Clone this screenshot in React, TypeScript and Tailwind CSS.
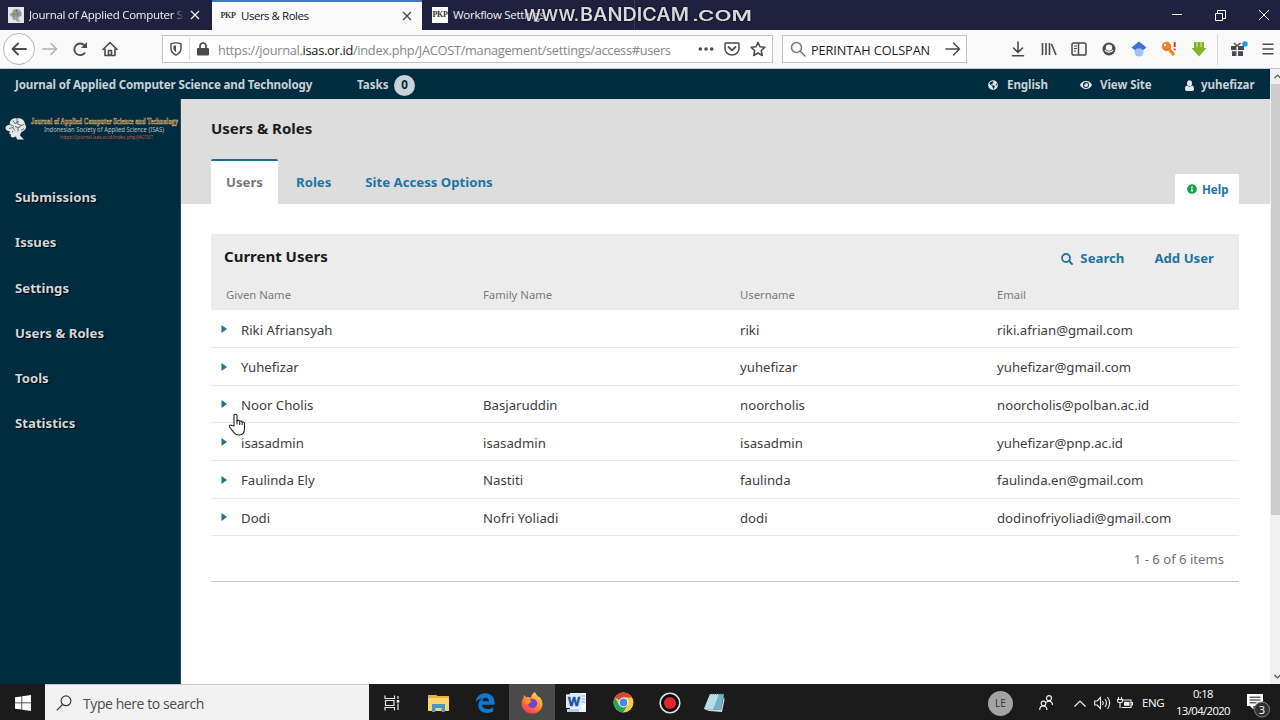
import type { ReactNode } from 'react';
import clsx from 'clsx';
import { FaEye, FaGlobeAmericas, FaInfoCircle } from 'react-icons/fa';

const navItems = ['Submissions', 'Issues', 'Settings', 'Users & Roles', 'Tools', 'Statistics'];

const users = [
  { given: 'Riki Afriansyah', family: '', username: 'riki', email: 'riki.afrian@gmail.com' },
  { given: 'Yuhefizar', family: '', username: 'yuhefizar', email: 'yuhefizar@gmail.com' },
  { given: 'Noor Cholis', family: 'Basjaruddin', username: 'noorcholis', email: 'noorcholis@polban.ac.id' },
  { given: 'isasadmin', family: 'isasadmin', username: 'isasadmin', email: 'yuhefizar@pnp.ac.id' },
  { given: 'Faulinda Ely', family: 'Nastiti', username: 'faulinda', email: 'faulinda.en@gmail.com' },
  { given: 'Dodi', family: 'Nofri Yoliadi', username: 'dodi', email: 'dodinofriyoliadi@gmail.com' },
];

function CloseIcon({ className }: { className?: string }) {
  return (
    <svg viewBox="0 0 10 10" className={clsx('h-[10px] w-[10px] shrink-0', className)} fill="none" stroke="currentColor" strokeWidth="1.3">
      <path d="M1 1l8 8M9 1L1 9" />
    </svg>
  );
}

function BrainHead({ className, color }: { className?: string; color: string }) {
  return (
    <svg viewBox="0 0 22 24" className={className}>
      <path
        d="M5 8C4 4 8 1 12 2c4-1 8 2 8 6 2 2 1 5-1 6l-3 2-1 3 4 4h-7l-1-3-3 1c-2 0-3-1-2-3l-2-1 1-2-3-1c-2-1-2-4 0-5z"
        fill={color}
      />
      <path
        d="M5 8l4 2M8 4l2 3 4-2M12 2v5l4 2 3-1M10 10l3 1 3-1M13 11v4M4 12l4-1 2 3M16 14l3-2M8 14l-1 2"
        stroke="#35505c"
        strokeWidth=".8"
        fill="none"
      />
    </svg>
  );
}

function PkpIcon() {
  return (
    <span className="flex h-4 w-4 shrink-0 items-center justify-center bg-white font-['Liberation_Serif',serif] text-[8px] font-bold tracking-[-0.4px] text-[#333]">
      PKP
    </span>
  );
}

function TabBar() {
  return (
    <div className="relative flex h-[30px] bg-[#20213f] text-[11.5px] tracking-[-0.28px] text-[#f0f0f4]">
      <div className="flex w-[212px] items-center pl-2">
        <span className="flex h-4 w-4 items-center justify-center bg-[#e5e5e5]">
          <BrainHead className="h-[14px] w-[14px]" color="#a5a5a5" />
        </span>
        <span className="ml-[5px] w-[155px] overflow-hidden whitespace-nowrap [mask-image:linear-gradient(to_right,black_92%,transparent)]">
          Journal of Applied Computer S
        </span>
        <CloseIcon className="ml-[6px]" />
      </div>
      <div className="flex w-[210px] items-center border-t-2 border-[#3d78c0] bg-[#f9f9fa] pl-2 text-[#15151a]">
        <PkpIcon />
        <span className="ml-[5px] w-[161px] tracking-[-0.48px]">Users &amp; Roles</span>
        <CloseIcon className="text-[#444]" />
      </div>
      <div className="flex w-[213px] items-center border-r border-[#3c3c58] pl-[10px]">
        <PkpIcon />
        <span className="ml-[5px] whitespace-nowrap">Workflow Settings</span>
      </div>
      <div className="ml-auto flex items-center text-white">
        <svg viewBox="0 0 10 10" className="h-[10px] w-[10px]" stroke="currentColor">
          <path d="M0 4.5h10" />
        </svg>
        <svg viewBox="0 0 11 11" className="ml-[33px] h-[11px] w-[11px]" fill="none" stroke="currentColor">
          <path d="M.5 3.5h7v7h-7zM2.5 3V.5h8v8H8" />
        </svg>
        <svg viewBox="0 0 10 10" className="mr-[11px] ml-[33px] h-[10px] w-[10px]" stroke="currentColor">
          <path d="M0 0l10 10M10 0L0 10" />
        </svg>
      </div>
      {/* screen recorder watermark */}
      <svg
        viewBox="0 0 230 29"
        className="absolute top-0 left-[524px] h-[29px] w-[230px] overflow-visible font-['Inter',sans-serif] font-semibold tracking-normal text-[#d8d8de] drop-shadow-[0_0_1px_#000]"
        fill="currentColor"
      >
        <text x="0" y="20.5" fontSize="16" textLength="55" lengthAdjust="spacingAndGlyphs">WWW.</text>
        <text x="56" y="20.5" fontSize="18" textLength="109" lengthAdjust="spacingAndGlyphs">BANDICAM</text>
        <text x="168" y="20.5" fontSize="14" textLength="60" lengthAdjust="spacingAndGlyphs">.COM</text>
      </svg>
    </div>
  );
}

function Toolbar() {
  return (
    <div className="flex h-[39px] items-center border-b border-[#c9c9cd] bg-[#f9f9fa] text-[#4a4a4f]">
      <span className="ml-[3px] flex h-8 w-8 items-center justify-center rounded-full border border-[#b5b5b8] bg-white">
        <svg viewBox="0 0 16 16" className="h-4 w-4" fill="none" stroke="currentColor" strokeWidth="1.8" strokeLinecap="round" strokeLinejoin="round">
          <path d="M15 8H1.5M7 2.5L1.5 8 7 13.5" />
        </svg>
      </span>
      <svg viewBox="0 0 16 16" className="ml-[7px] h-4 w-4 text-[#b2b2b5]" fill="none" stroke="currentColor" strokeWidth="1.6" strokeLinecap="round" strokeLinejoin="round">
        <path d="M1 8h13.5M9 2.5L14.5 8 9 13.5" />
      </svg>
      <svg viewBox="0 0 16 16" className="ml-[14px] h-4 w-4" fill="none" stroke="currentColor" strokeWidth="1.9">
        <path d="M13 11.5A5.8 5.8 0 1 1 12.5 4.5" />
        <path d="M15 1v6H9z" fill="currentColor" stroke="none" />
      </svg>
      <svg viewBox="0 0 16 16" className="ml-[14px] h-4 w-4" fill="none" stroke="currentColor" strokeWidth="1.6" strokeLinejoin="round" strokeLinecap="round">
        <path d="M1 8.5L8 1.5l7 7M3 8v6.500h10V8" />
        <path d="M6.500 14V9.500h3V14z" />
      </svg>

      <div className="ml-[44px] flex h-[28px] w-[611px] items-center border border-[#c2c2c6] bg-white">
        <svg viewBox="0 0 14 14" className="ml-[6px] h-[14px] w-[14px]" fill="none" stroke="currentColor" strokeWidth="1.4">
          <path d="M7 .9c1.800 0 3.500.3 5 .9v4.500c0 3.200-1.900 5.400-5 6.900-3.100-1.500-5-3.700-5-6.900V1.800C3.500 1.200 5.200.9 7 .9z" />
          <path d="M7 3.500v6.500c-1.700-1-2.500-2-2.500-4V3.800z" fill="currentColor" stroke="none" />
        </svg>
        <span className="ml-[6px] h-[22px] w-px bg-[#d9d9dc]" />
        <svg viewBox="0 0 12 14" className="ml-[7px] h-[14px] w-3" fill="currentColor">
          <rect x="0" y="6" width="12" height="7.500" rx="1" />
          <path d="M3 6.500V4a3 3 0 0 1 6 0v2.500" fill="none" stroke="currentColor" strokeWidth="1.700" />
        </svg>
        <span className="ml-[9px] w-[480px] pt-[3px] text-[12.800px] tracking-[-0.29px] whitespace-nowrap text-[#85858a]">
          https://journal.<span className="text-[#151518]">isas.or.id</span>/index.php/JACOST/management/settings/access#users
        </span>
        <svg viewBox="0 0 16 4" className="h-1 w-4 shrink-0" fill="currentColor">
          <circle cx="2.300" cy="2" r="1.800" />
          <circle cx="8" cy="2" r="1.800" />
          <circle cx="13.700" cy="2" r="1.800" />
        </svg>
        <svg viewBox="0 0 16 14" className="ml-[10px] h-[14px] w-4 shrink-0" fill="none" stroke="currentColor" strokeWidth="1.500" strokeLinecap="round" strokeLinejoin="round">
          <path d="M2 1h12a1 1 0 0 1 1 1v4.500a7 6.500 0 0 1-14 0V2a1 1 0 0 1 1-1z" />
          <path d="M4.500 5L8 8.300 11.500 5" strokeWidth="1.800" />
        </svg>
        <svg viewBox="0 0 16 16" className="ml-[10px] h-4 w-4 shrink-0" fill="none" stroke="currentColor" strokeWidth="1.500" strokeLinejoin="round">
          <path d="M8 1.300l2 4.500 4.900.5-3.700 3.300 1.100 4.900L8 12l-4.300 2.500 1.100-4.900L1.100 6.300 6 5.800z" />
        </svg>
      </div>

      <div className="ml-[9px] flex h-[28px] w-[185px] items-center border border-[#c2c2c6] bg-white">
        <svg viewBox="0 0 16 16" className="ml-[7px] h-4 w-4 text-[#77777a]" fill="none" stroke="currentColor" strokeWidth="1.500" strokeLinecap="round">
          <circle cx="6.500" cy="6.500" r="5" />
          <path d="M10.300 10.300L15 15" />
        </svg>
        <span className="ml-[5px] w-[134px] pt-[3px] text-[12.700px] tracking-[-0.05px] whitespace-nowrap text-[#222]">PERINTAH COLSPAN</span>
        <svg viewBox="0 0 16 16" className="h-4 w-4 shrink-0" fill="none" stroke="currentColor" strokeWidth="1.500" strokeLinecap="round" strokeLinejoin="round">
          <path d="M1 8h13.500M8.500 2l6 6-6 6" />
        </svg>
      </div>

      <div className="ml-[44px] flex items-center">
        <svg viewBox="0 0 14 16" className="h-4 w-[14px]" fill="none" stroke="currentColor" strokeWidth="1.600" strokeLinecap="round" strokeLinejoin="round">
          <path d="M7 1v10M2.500 7L7 11.300 11.500 7M1.500 14.800h11" />
        </svg>
        <svg viewBox="0 0 16 14" className="ml-4 h-[14px] w-4" fill="none" stroke="currentColor" strokeWidth="1.600">
          <path d="M1.500 1v12M5 1v12M8.500 1v12M10.500 2l4.500 11" />
        </svg>
        <svg viewBox="0 0 16 14" className="ml-[14px] h-[14px] w-4" fill="none" stroke="currentColor" strokeWidth="1.500">
          <rect x="1" y="1" width="14" height="12" rx="1.800" />
          <path d="M7.500 1v12" />
          <path d="M3 4h3M3 6.500h3M3 9h2" strokeWidth="1" />
        </svg>
        {/* account: ring with a head and shoulders */}
        <svg viewBox="0 0 14 14" className="ml-[15px] h-[14px] w-[14px]">
          <circle cx="7" cy="7" r="6.500" fill="currentColor" />
          <circle cx="7" cy="5.600" r="3.200" fill="#f9f9fa" />
          <path d="M2.800 8.200c2 2.600 6.400 2.600 8.400 0" fill="none" stroke="#f9f9fa" strokeWidth="1.100" />
        </svg>
        <svg viewBox="0 0 16 16" className="ml-[15px] h-4 w-4">
          <circle cx="8" cy="11" r="4.500" fill="#a3c1f7" />
          <path d="M8 .5L.5 6.500 4 9.300c1.500-2.800 6.500-2.800 8 0l3.500-2.800z" fill="#3d72d2" />
        </svg>
        <svg viewBox="0 0 16 16" className="ml-[14px] h-4 w-4">
          <circle cx="5.500" cy="5.500" r="4.700" fill="#f5811f" />
          <path d="M7 7l6 7" stroke="#f5811f" strokeWidth="3.400" />
          <circle cx="4" cy="4" r="1.200" fill="#fff" />
          <path d="M13.700 1v5M13.700 7.500v1.800" stroke="#d23c50" strokeWidth="2" />
        </svg>
        <svg viewBox="0 0 16 16" className="ml-[14px] h-4 w-4">
          <path d="M3 1h10v6h2.500L8 15.500.5 7H3z" fill="#82b526" />
          <path d="M6 1v5M10 1v5" stroke="#d8ecb0" />
        </svg>
        <span className="ml-[10px] h-[31px] w-px bg-[#d6d6d9]" />
        <svg viewBox="0 0 18 16" className="ml-[12px] h-4 w-[18px]">
          <path d="M1 5h5.500v4H1zM8 5h6v4H8zM2 10.300h4.500V15H2zM8 10.300h5V15H8z" fill="#4a4a4f" />
          <path d="M4 2l3 3 3.500-3" fill="none" stroke="#4a4a4f" strokeWidth="1.600" />
          <circle cx="15" cy="3" r="2.800" fill="#1e9fe5" />
        </svg>
        <svg viewBox="0 0 12 12" className="ml-[14px] h-3 w-3" stroke="currentColor" strokeWidth="1.500">
          <path d="M.5 1.200h11M.5 6h11M.5 10.800h11" />
        </svg>
      </div>
    </div>
  );
}

function AppHeader() {
  return (
    <div className="flex h-[30px] items-center bg-[#002c40] pt-[2px] pl-[15px] text-[11.600px] font-bold text-[#c9d2d6]">
      <span className="w-[342px] tracking-[-0.14px] whitespace-nowrap">Journal of Applied Computer Science and Technology</span>
      <span className="w-[37px]">Tasks</span>
      <span className="flex h-[21px] w-[21px] items-center justify-center rounded-full bg-[#c9d2d6] text-[#002c40]">0</span>
      <FaGlobeAmericas className="ml-[573px] h-[10px] w-[10px] text-[#e3e9ec]" />
      <span className="ml-[9px] w-[42px] tracking-[-0.1px]">English</span>
      <FaEye className="ml-[31px] h-3 w-3 text-[#e3e9ec]" />
      <span className="ml-[8px] w-[52px] tracking-[-0.1px] whitespace-nowrap">View Site</span>
      <svg viewBox="0 0 9 11" className="ml-[33px] h-[11px] w-[9px]" fill="#e3e9ec">
        <ellipse cx="4.500" cy="3.200" rx="2.500" ry="3" />
        <path d="M2 5.500c1.500 1.500 3.500 1.500 5 0 1.700.4 2 2 2 3.500 0 1.300-.7 2-1.700 2H1.700C.7 11 0 10.300 0 9c0-1.500.3-3.100 2-3.500z" />
      </svg>
      <span className="ml-[7px] tracking-[-0.1px]">yuhefizar</span>
    </div>
  );
}

function Sidebar() {
  return (
    <aside className="w-[181px] shrink-0 border-r border-[#23485a] bg-[#002c40]">
      <div className="flex h-[76px] pt-[17px] pl-[5px]">
        <BrainHead className="h-[25px] w-[22px]" color="#e6e6e6" />
        <svg viewBox="0 0 150 28" className="ml-[3px] h-7 w-[150px]">
          <text x="1" y="8" fontSize="8" fontWeight="bold" fill="#111" stroke="#c5aa70" strokeWidth=".6" textLength="147" lengthAdjust="spacingAndGlyphs" className="font-['Liberation_Serif',serif]">
            Journal of Applied Computer Science and Technology
          </text>
          <text x="14" y="16" fontSize="6.500" fill="#b9c4c4" textLength="120" lengthAdjust="spacingAndGlyphs">
            Indonesian Society of Applied Science (ISAS)
          </text>
          <text x="30" y="22.500" fontSize="5" fill="#bf5840" textLength="93" lengthAdjust="spacingAndGlyphs">
            https://journal.isas.or.id/index.php/JACOST
          </text>
        </svg>
      </div>
      <nav>
        {navItems.map((item) => (
          <a key={item} className="flex h-[45.200px] items-center pt-px pl-[15px] text-[13.200px] font-bold text-[#d0d8dc] [text-shadow:1px_1px_1px_#000]">
            {item}
          </a>
        ))}
      </nav>
    </aside>
  );
}

function Cell({ children, className }: { children?: ReactNode; className?: string }) {
  return <div className={clsx('w-1/4 pl-[15px]', className)}>{children}</div>;
}

function UsersGrid() {
  return (
    <section className="mt-[30px] mr-[31px] ml-[30px] border-b border-[#c4c6c8]">
      <div className="h-[76.400px] bg-[#ececec]">
        <div className="flex h-[48px] items-center pl-[13px] font-bold text-[#1e74a3]">
          <h2 className="pb-[4px] text-[15px] text-[#1a1a1a]">Current Users</h2>
          <svg viewBox="0 0 12 12" className="mt-px ml-auto h-3 w-3" fill="none" stroke="currentColor" strokeWidth="1.800" strokeLinecap="round">
            <circle cx="5" cy="5" r="4" />
            <path d="M8 8l3 3" />
          </svg>
          <span className="ml-[7px] pt-[2px] text-[13.200px]">Search</span>
          <span className="mr-[25px] ml-[30px] pt-[2px] text-[13.200px]">Add User</span>
        </div>
        <div className="flex pt-[5px] text-[11.300px] text-[#7b7b7b]">
          <Cell>Given Name</Cell>
          <Cell>Family Name</Cell>
          <Cell>Username</Cell>
          <Cell>Email</Cell>
        </div>
      </div>
      {users.map((user) => (
        <div key={user.username} className="flex h-[37.650px] items-center border-b border-[#e9e9e9] pt-[4px] text-[13.200px] text-[#3d3d3d]">
          <Cell className="flex items-center pl-[10px]!">
            <svg viewBox="0 0 6 8" className="mr-[14px] mb-[3px] h-2 w-[6px]" fill="#1e7293">
              <path d="M.5 0L6 4 .5 8z" />
            </svg>
            {user.given}
          </Cell>
          <Cell>{user.family}</Cell>
          <Cell>{user.username}</Cell>
          <Cell>{user.email}</Cell>
        </div>
      ))}
      <div className="flex h-[45px] items-center justify-end pt-[3px] pr-[15px] text-[13.100px] text-[#6f6f6f]">1 - 6 of 6 items</div>
    </section>
  );
}

function Content() {
  return (
    <main className="flex-1 bg-white">
      <div className="flex h-[105px] flex-col bg-[#dddddd] pl-[30px]">
        <h1 className="h-[60px] pt-[18px] text-[15px] leading-[22px] font-bold text-[#1c1c1c]">Users &amp; Roles</h1>
        <div className="flex h-[45px] text-[13.200px] font-bold text-[#1e74a3]">
          <div className="flex w-[67px] justify-center rounded-t-[2px] border-t-2 border-[#1a6b93] bg-white pt-[12px] text-[#777]">Users</div>
          <div className="pt-[14px] pl-[18px]">Roles</div>
          <div className="pt-[14px] pl-[34px]">Site Access Options</div>
          <div className="mt-auto mr-[31px] ml-auto flex h-[30px] w-[64px] items-center rounded-t-[2px] bg-white pl-[12px] text-[11.600px]">
            <FaInfoCircle className="mr-[5px] h-[10px] w-[10px] text-[#12a550]" />
            <span className="pt-[2px]">Help</span>
          </div>
        </div>
      </div>
      <UsersGrid />
    </main>
  );
}

function ScrollBar() {
  return (
    <div className="flex w-[10px] shrink-0 flex-col items-center justify-between bg-[#f0f0f0] py-[5px]">
      <svg viewBox="0 0 8 5" className="ml-[4px] h-[5px] w-[7px]" fill="none" stroke="#555" strokeWidth="1.400">
        <path d="M.5 4.500L4 1l3.500 3.500" />
      </svg>
      <div className="mt-[5px] mb-auto ml-px h-[431px] w-[9px] bg-[#cdcdcd]" />
      <svg viewBox="0 0 8 5" className="ml-[4px] h-[5px] w-[7px]" fill="none" stroke="#555" strokeWidth="1.400">
        <path d="M.5.500L4 4 7.500.500" />
      </svg>
    </div>
  );
}

function TaskSlot({ children, active }: { children: ReactNode; active?: boolean }) {
  return <div className={clsx('flex h-full w-[46px] items-center justify-center pt-px', active && 'bg-[#4a4a4a]')}>{children}</div>;
}

function Taskbar() {
  return (
    <div className="flex h-[36px] items-center bg-[#1b1b1b] text-white">
      <div className="flex w-[45px] justify-center pt-[2px]">
        <svg viewBox="0 0 16 16" className="h-4 w-4" fill="#fff">
          <path d="M0 2.300L6.500 1.400v6.200H0zM7.200 1.300L16 0v7.600H7.200zM0 8.300h6.500v6.200L0 13.700zM7.200 8.300H16V16l-8.800-1.300z" />
        </svg>
      </div>
      <div className="flex h-full w-[324px] items-center border-t border-[#c8c8c8] bg-[#f1f1f1] pl-[11px] text-[#4b4b4b]">
        <svg viewBox="0 0 16 16" className="h-4 w-4" fill="none" stroke="#3a3a3a" strokeWidth="1.200">
          <circle cx="10" cy="5.800" r="4.900" />
          <path d="M6.500 9.500L.8 15.300" />
        </svg>
        <span className="ml-[11px] pt-px text-[14px] tracking-[-0.42px]">Type here to search</span>
      </div>
      <TaskSlot>
        <svg viewBox="0 0 16 16" className="mr-px h-4 w-4" fill="none" stroke="#e8e8e8" strokeWidth="1.200">
          <path d="M1 .5v3h9.500v-3M1.500 5.500h8.500v5H1.500zM1 15.500v-3h9.500v3M14 1v3M14 8.500V15" />
          <path d="M12.700 5h2.600v2.600h-2.600z" fill="#e8e8e8" stroke="none" />
        </svg>
      </TaskSlot>
      <TaskSlot>
        <svg viewBox="0 0 21 18" className="h-[18px] w-[21px]">
          <path d="M0 1h8l2 1h11v15H0z" fill="#e9b03c" />
          <path d="M0 4h21v13H0z" fill="#fbd56b" />
          <path d="M4 18v-8h13v8h-3.500v-4h-6v4z" fill="#4797cc" />
        </svg>
      </TaskSlot>
      <TaskSlot>
        <svg viewBox="0 0 20 20" className="mr-[-1px] h-5 w-5">
          <path
            d="M.7 9C1.500 3.500 5.500.3 10.300.3c5.500 0 9.200 4 9.200 9v2.500H7c.3 3 3 4.300 6 4.300 2 0 3.800-.6 5.200-1.500v3.900c-1.700.9-3.800 1.400-6.200 1.400-5 0-8.700-3-8.700-7.700 0-3 1.500-5.500 4-6.800C5 5.600 2.500 6.500.7 9zm6.500-.800h6.700c0-2-1.200-3.500-3.200-3.500S7.500 6.200 7.200 8.200z"
            fill="#087ad8"
            fillRule="evenodd"
          />
        </svg>
      </TaskSlot>
      <div className="w-[2px]" />
      <TaskSlot active>
        <svg viewBox="0 0 22 22" className="mr-px h-[22px] w-[22px]">
          <defs>
            <linearGradient id="fox" x1=".8" y1="0" x2=".2" y2="1">
              <stop offset="0" stopColor="#ffe14a" />
              <stop offset=".5" stopColor="#ff8a26" />
              <stop offset="1" stopColor="#f52a5e" />
            </linearGradient>
          </defs>
          <path d="M14 0c.5 2 2 3 3 4.500L18.500 5c2 2 3 4.500 3 7 0 5.500-4.500 9.700-10.300 9.700C5.300 21.700.6 17.500.6 11.700c0-2.500.8-4.500 2-6L3 3l2.500 2.200c2-.5 3-.2 4.500.5C10 3.500 12 1 14 0z" fill="url(#fox)" />
          <circle cx="11.500" cy="11.500" r="4.700" fill="#7a3fd3" />
          <path d="M4.500 8c2.500-1 4.500-.5 6 1.300-.8 1.500-2.500 1.700-3.200 3.200C5 12 4 10 4.500 8z" fill="#ff9a24" />
        </svg>
      </TaskSlot>
      <TaskSlot>
        <svg viewBox="0 0 21 20" className="mr-[3px] h-5 w-[21px]">
          <path d="M4 0h16v19H4z" fill="#eef3fb" />
          <path d="M15.500 3H19M15.500 6H19M15.500 9H19" stroke="#7fa2d4" />
          <path d="M0 1.500L15 0v15H0z" fill="#dce8f7" />
          <text x="2" y="12.500" fontSize="13" fontWeight="bold" fill="#1c50a0" stroke="#1c50a0" strokeWidth=".5" textLength="12" lengthAdjust="spacingAndGlyphs">W</text>
          <path d="M1 16h12v3H1z" fill="#b8cae6" />
          <path d="M14 13l6-2-2 6z" fill="#fff" />
        </svg>
      </TaskSlot>
      <TaskSlot>
        <svg viewBox="0 0 22 22" className="mr-px h-[21px] w-[21px]">
          <circle cx="11" cy="11" r="10.500" fill="#f9cb3a" />
          <path d="M11 11L1.900 5.750A10.500 10.500 0 0 1 20.100 5.750H11z" fill="#dc4437" />
          <path d="M1.900 5.750A10.500 10.500 0 0 0 10.500 21.500L15.500 13.600 6.500 13.600z" fill="#29a15a" />
          <circle cx="11" cy="11" r="5.200" fill="#fff" />
          <circle cx="11" cy="11" r="4.100" fill="#4688f0" />
        </svg>
      </TaskSlot>
      <TaskSlot>
        <svg viewBox="0 0 22 22" className="mr-px h-[22px] w-[22px]">
          <circle cx="11" cy="11" r="9.800" fill="#080808" stroke="#e0e0e0" strokeWidth="1.600" />
          <circle cx="11" cy="11" r="6" fill="#e8222a" />
        </svg>
      </TaskSlot>
      <TaskSlot>
        <svg viewBox="0 0 21 20" className="mr-[3px] h-5 w-[21px]">
          <path d="M6 1h14l-3 16-17-1z" fill="#6fb5c4" />
          <path d="M6 1h9L9 16.500 0 16z" fill="#b5dfe6" />
          <path d="M0 16l17 1 3-14 .5 4-2.500 12-13-1z" fill="#d5dbdd" />
          <path d="M6 1h14" stroke="#555" strokeDasharray="1 1" />
        </svg>
      </TaskSlot>

      <div className="ml-auto flex h-full items-center pt-[2px]">
        <span className="mr-[26px] flex h-[25px] w-[25px] items-center justify-center rounded-full bg-[#a3a3a3] text-[10px] text-[#333]">LE</span>
        <svg viewBox="0 0 14 16" className="h-4 w-[14px]" fill="none" stroke="#f0f0f0" strokeWidth="1.200">
          <circle cx="10" cy="3.200" r="2.500" />
          <circle cx="4.500" cy="8.500" r="2.300" />
          <path d="M.7 15c0-5.500 7.300-5.500 7.300 0M7.500 7.200c3-2.500 6-.500 6 2.800" />
        </svg>
        <svg viewBox="0 0 12 7" className="ml-[21px] h-[7px] w-3" fill="none" stroke="#f0f0f0" strokeWidth="1.200">
          <path d="M.5 6.500L6 1l5.500 5.500" />
        </svg>
        <svg viewBox="0 0 17 14" className="ml-[8px] h-[14px] w-[17px]" fill="none" stroke="#f0f0f0" strokeWidth="1.100">
          <path d="M.7 5h2.500L6.500 1.500v11L3.200 9H.7zM8.500 5c.9 1.300.9 2.700 0 4M11 3c1.800 2.500 1.800 5.500 0 8M13.500 1c2.700 3.800 2.700 8.200 0 12" />
        </svg>
        <svg viewBox="0 0 16 12" className="ml-[6px] h-3 w-4" fill="none" stroke="#f0f0f0" strokeWidth="1.100">
          <path d="M1.500 0v2.500M4.500 0v2.500M.6 2.500h4.800v2C5.400 6 .6 6 .6 4.500zM3 6v5M5.500 3h8.500v7.500H4.500M14.500 5.500h1v2.500h-1" />
          <path d="M7 4.800h5.500v4H7z" fill="#f0f0f0" stroke="none" />
        </svg>
        <span className="ml-[9px] w-[22px] text-[11.500px] tracking-[-0.45px]">ENG</span>
        <div className="ml-[8px] w-[62px] text-center text-[11.300px] leading-[17px] tracking-[-0.6px]">
          <div className="-mt-[2px]">0:18</div>
          <div>13/04/2020</div>
        </div>
        <svg viewBox="0 0 24 24" className="mt-[5px] mr-[9px] ml-[13px] h-6 w-6">
          <path d="M0 0h16v12H6.500v3.500L3 12H0z" fill="#fff" />
          <path d="M2.500 3.200h11M2.500 6h11M2.500 8.800h7" stroke="#1b1b1b" />
          <circle cx="15" cy="15.500" r="7.500" fill="#303030" stroke="#858585" />
          <text x="15" y="19.500" fontSize="11" fill="#fff" textAnchor="middle">3</text>
        </svg>
      </div>
    </div>
  );
}

export default function App() {
  return (
    <div className="relative flex h-[720px] w-[1280px] flex-col overflow-hidden bg-white font-['Noto_Sans',sans-serif]">
      <div className="font-['Open_Sans',sans-serif]">
        <TabBar />
        <Toolbar />
      </div>
      <div className="flex min-h-0 flex-1">
        <div className="flex w-[1270px] flex-col">
          <AppHeader />
          <div className="flex min-h-0 flex-1">
            <Sidebar />
            <Content />
          </div>
        </div>
        <ScrollBar />
      </div>
      <div className="font-['Open_Sans',sans-serif]">
        <Taskbar />
      </div>

      {/* hand pointer */}
      <svg viewBox="0 0 18 23" className="absolute top-[413px] left-[228px] h-[23px] w-[18px]" fill="#fff" stroke="#222" strokeWidth="1.100" strokeLinejoin="round">
        <path d="M6 13V2.500C6 .8 9 .8 9 2.500V8c.5-1 2.500-.8 2.700.5.700-.8 2.300-.5 2.500.8.800-.6 2.300-.2 2.300 1.200v5c0 4-2 6.500-5.500 6.500-3 0-4.300-1-5.800-3.300L1.500 14c-.7-1.700 1-2.700 2.300-1.500z" />
        <path d="M9 7.500v4M11.700 8.500v3.500M14.200 9.500V12" fill="none" />
      </svg>
    </div>
  );
}
